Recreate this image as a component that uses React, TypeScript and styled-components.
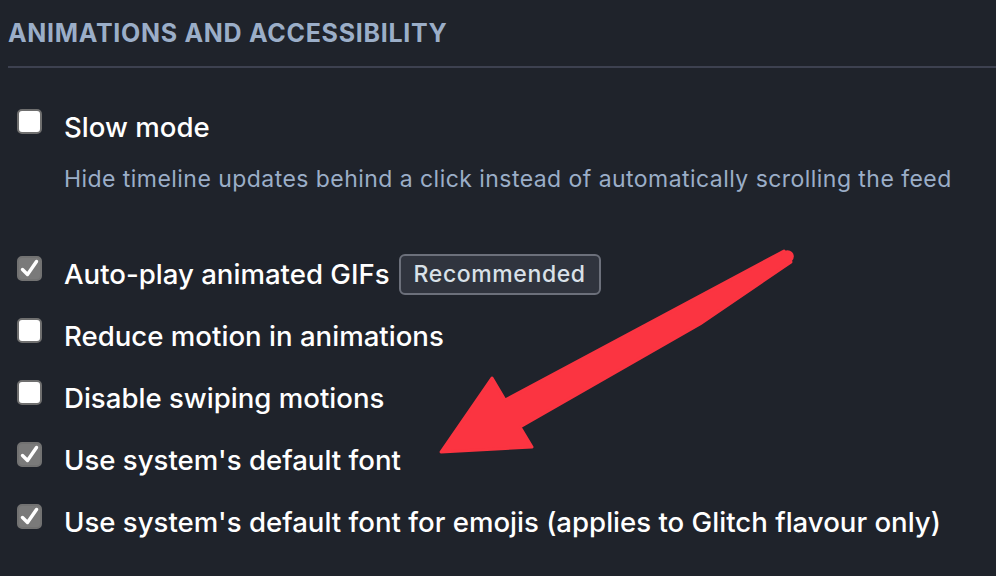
import React from "react";
import styled, { createGlobalStyle } from "styled-components";

const Global = createGlobalStyle`
  html, body {
    margin: 0;
    padding: 0;
    background: #1f232b;
    overflow: hidden;
  }
  body {
    font-family: Inter, "Noto Sans", "Liberation Sans", sans-serif;
    -webkit-font-smoothing: antialiased;
  }
`;

const Page = styled.div`
  position: relative;
  width: 996px;
  height: 576px;
  padding: 17px 0 0 8px;
  box-sizing: border-box;
  background: #1f232b;
`;

const Heading = styled.h2`
  margin: 0;
  padding-bottom: 17px;
  border-bottom: 2px solid #3d4150;
  font-size: 25px;
  line-height: 32px;
  font-weight: 700;
  color: #9baec8;
  text-transform: uppercase;
  letter-spacing: 0.7px;
`;

const List = styled.div`
  display: flex;
  flex-direction: column;
  padding-top: 41px;
`;

const Row = styled.div<{ $gap: number }>`
  display: flex;
  align-items: flex-start;
  margin-bottom: ${(p) => p.$gap}px;
`;

const Box = styled.span<{ $checked: boolean }>`
  flex: none;
  width: 25px;
  height: 25px;
  margin-left: 9px;
  margin-right: 22px;
  box-sizing: border-box;
  border-radius: 5px;
  border: 2px solid ${(p) => (p.$checked ? "#727272" : "#6f6f6f")};
  background: ${(p) => (p.$checked ? "#7a7a7a" : "#ffffff")};
  display: flex;
  align-items: center;
  justify-content: center;
`;

const Body = styled.div`
  display: flex;
  flex-direction: column;
`;

const LabelLine = styled.div`
  display: flex;
  align-items: center;
  height: 36px;
  gap: 9px;
  font-size: 27.6px;
  line-height: 36px;
  font-weight: 500;
  color: #ffffff;
`;

const Hint = styled.div`
  margin-top: 19px;
  font-size: 23px;
  line-height: 30px;
  font-weight: 400;
  letter-spacing: 0.45px;
  color: #9baec8;
`;

const Badge = styled.span`
  display: inline-flex;
  align-items: center;
  height: 41px;
  box-sizing: border-box;
  padding: 0 13px;
  border: 2px solid #6c707b;
  border-radius: 6px;
  background: #30343e;
  color: #d9e1e8;
  font-size: 23px;
  letter-spacing: 0.6px;
  font-weight: 500;
`;

const Overlay = styled.svg`
  position: absolute;
  left: 0;
  top: 0;
  pointer-events: none;
`;

const Check = () => (
  <svg width="21" height="21" viewBox="0 0 21 21">
    <path
      d="M3.5 11.5 L8.5 16.5 L17.5 3.5"
      fill="none"
      stroke="#ffffff"
      strokeWidth="3.4"
      strokeLinecap="round"
      strokeLinejoin="round"
    />
  </svg>
);

type Item = {
  label: string;
  checked: boolean;
  hint?: string;
  badge?: string;
  gap: number;
};

const items: Item[] = [
  {
    label: "Slow mode",
    checked: false,
    hint: "Hide timeline updates behind a click instead of automatically scrolling the feed",
    gap: 62,
  },
  { label: "Auto-play animated GIFs", checked: true, badge: "Recommended", gap: 26 },
  { label: "Reduce motion in animations", checked: false, gap: 26 },
  { label: "Disable swiping motions", checked: false, gap: 26 },
  { label: "Use system's default font", checked: true, gap: 26 },
  {
    label: "Use system's default font for emojis (applies to Glitch flavour only)",
    checked: true,
    gap: 0,
  },
];

export default function App() {
  return (
    <>
      <Global />
      <Page>
        <Heading>Animations and accessibility</Heading>
        <List>
          {items.map((it) => (
            <Row key={it.label} $gap={it.gap}>
              <Box $checked={it.checked}>{it.checked && <Check />}</Box>
              <Body>
                <LabelLine>
                  <span>{it.label}</span>
                  {it.badge && <Badge>{it.badge}</Badge>}
                </LabelLine>
                {it.hint && <Hint>{it.hint}</Hint>}
              </Body>
            </Row>
          ))}
        </List>
        <Overlay width="996" height="576" viewBox="0 0 996 576">
          <polygon
            points="784,251 791,262 700,324 520,427 532,447 441,452 492,378 505,400"
            fill="#fb3441"
            stroke="#fb3441"
            strokeWidth="3"
            strokeLinejoin="round"
          />
          <circle cx="787.5" cy="256.5" r="6.3" fill="#fb3441" />
        </Overlay>
      </Page>
    </>
  );
}
